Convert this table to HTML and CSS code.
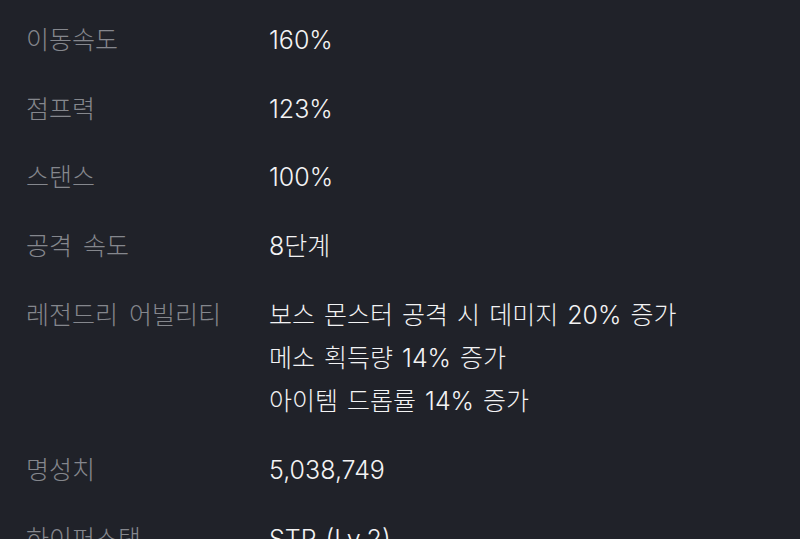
FILE: index.html
```html
<!DOCTYPE html>
<html lang="ko">
<head>
  <meta charset="UTF-8">
  <meta name="viewport" content="width=device-width, initial-scale=1.0">
  <title>캐릭터 스탯</title>
  <link rel="stylesheet" href="styles.css">
</head>
<body>

  <main class="stat-list">
    <div class="stat-row">
      <div class="stat-label">이동속도</div>
      <div class="stat-value">160%</div>
    </div>
    <div class="stat-row">
      <div class="stat-label">점프력</div>
      <div class="stat-value">123%</div>
    </div>
    <div class="stat-row">
      <div class="stat-label">스탠스</div>
      <div class="stat-value">100%</div>
    </div>
    <div class="stat-row">
      <div class="stat-label">공격 속도</div>
      <div class="stat-value">8단계</div>
    </div>
    <div class="stat-row">
      <div class="stat-label">레전드리 어빌리티</div>
      <div class="stat-value">
        <p>보스 몬스터 공격 시 데미지 20% 증가</p>
        <p>메소 획득량 14% 증가</p>
        <p>아이템 드롭률 14% 증가</p>
      </div>
    </div>
    <div class="stat-row">
      <div class="stat-label">명성치</div>
      <div class="stat-value">5,038,749</div>
    </div>
    <div class="stat-row">
      <div class="stat-label">하이퍼스탯</div>
      <div class="stat-value">STR (Lv.2)</div>
    </div>
  </main>

</body>
</html>
```

FILE: styles.css
```css
body {
  margin: 0;
  padding: 0;
  background-color: #202229;
  font-family: "Inter", "Noto Sans CJK KR", sans-serif;
  font-weight: 300;
  overflow: hidden;
}

.stat-list {
  padding: 6px 0 0 26px;
}

.stat-row {
  display: grid;
  grid-template-columns: 243px 1fr;
  padding: 12.9px 0;
  font-size: 25px;
  line-height: 43px;
}

.stat-label {
  color: #85878d;
  word-spacing: 4px;
}

.stat-value {
  color: #f3f3f4;
  word-spacing: 2px;
}

.stat-value p {
  margin: 0;
}
```
